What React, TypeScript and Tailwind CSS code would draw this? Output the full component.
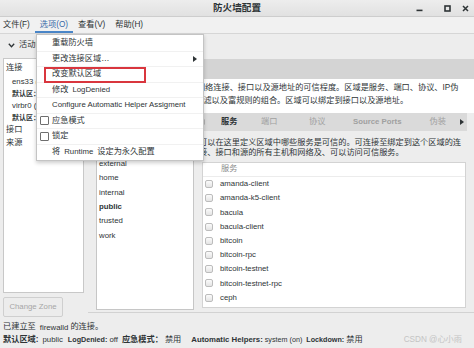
const zones = ["block", "dmz", "drop", "external", "home", "internal", "public", "trusted", "work"];

const services = [
  "amanda-client",
  "amanda-k5-client",
  "bacula",
  "bacula-client",
  "bitcoin",
  "bitcoin-rpc",
  "bitcoin-testnet",
  "bitcoin-testnet-rpc",
  "ceph",
];

function ListCheck() {
  return (
    <span className="block h-[8px] w-[8px] rounded-[2px] border border-[#bcbcbc] bg-linear-to-b from-[#fbfbfb] to-[#e4e4e4]" />
  );
}

function MenuCheck() {
  return <span className="block h-[9px] w-[9px] rounded-[1px] border border-[#6e6e6e] bg-white" />;
}

function Triangle({ dir, className = "" }: { dir: "left" | "right"; className?: string }) {
  return (
    <svg className={className} width="4" height="6" viewBox="0 0 4 6">
      <path d={dir === "right" ? "M0 0 L4 3 L0 6 Z" : "M4 0 L0 3 L4 6 Z"} fill="currentColor" />
    </svg>
  );
}

export default function App() {
  return (
    <div className="relative h-[348px] w-[474px] overflow-hidden bg-[#ededed] font-['Liberation_Sans','Noto_Sans_CJK_SC',sans-serif] text-[8.2px] leading-none text-[#2e3436]">
      {/* title bar */}
      <div className="grid h-[17px] grid-cols-[1fr_auto_1fr] items-center border-b border-[#cdcdcd] bg-linear-to-b from-[#ededed] to-[#e1e1e1]">
        <div />
        <div className="text-[9.6px] font-bold">防火墙配置</div>
        <div className="flex items-center justify-end pr-[5px]">
          <svg width="7" height="7" viewBox="0 0 7 7">
            <rect x="0.5" y="4.6" width="6" height="1.6" fill="#2e3436" />
          </svg>
          <svg className="ml-[21px]" width="7" height="7" viewBox="0 0 7 7">
            <rect x="1" y="1" width="5" height="5" fill="none" stroke="#2e3436" strokeWidth="1.6" />
          </svg>
          <svg className="ml-[11px]" width="7" height="7" viewBox="0 0 7 7">
            <path d="M1 1 L6 6 M6 1 L1 6" stroke="#2e3436" strokeWidth="1.5" />
          </svg>
        </div>
      </div>

      {/* menu bar */}
      <div className="flex h-[17px] items-stretch border-b border-[#d6d6d6] bg-[#f1f1f1]">
        <div className="-ml-[2px] flex items-center px-[5px]">文件(F)</div>
        <div className="flex items-center border-b-2 border-[#4a86c8] px-[5px] pt-[2px] text-[#3769a8]">选项(O)</div>
        <div className="flex items-center px-[5px]">查看(V)</div>
        <div className="flex items-center px-[5px]">帮助(H)</div>
      </div>

      {/* toolbar */}
      <div className="flex h-[22px] items-center pl-[8px]">
        <svg width="7" height="5" viewBox="0 0 7 5">
          <path d="M0.8 0.8 L3.5 3.8 L6.2 0.8" fill="none" stroke="#2e3436" strokeWidth="1.3" />
        </svg>
        <span className="ml-[4px]">活动的绑定</span>
      </div>

      {/* body */}
      <div className="flex h-[263px]">
        {/* left column */}
        <div className="ml-[3px] flex w-[81px] flex-col pt-[2px]">
          <div className="h-[235px] border border-[#c8c8c8] bg-white pl-[2px] pt-[3px]">
            <div className="flex h-[12px] items-center">连接</div>
            <div className="mt-[2px] flex h-[12px] items-center whitespace-nowrap pl-[6px] text-[7.8px]">ens33 (ens33)</div>
            <div className="flex h-[10px] items-center whitespace-nowrap pl-[6px] text-[7px] font-bold">默认区：public</div>
            <div className="mt-[2px] flex h-[12px] items-center whitespace-nowrap pl-[6px] text-[7.8px]">virbr0 (virbr0)</div>
            <div className="flex h-[10px] items-center whitespace-nowrap pl-[6px] text-[7px] font-bold">默认区：public</div>
            <div className="mt-[2px] flex h-[12px] items-center">接口</div>
            <div className="mt-[1px] flex h-[12px] items-center">来源</div>
          </div>
          <div className="mt-[4px] flex h-[20px] w-[60px] items-center justify-center rounded-[2px] border border-[#cfcfcf] bg-[#ececec] text-[7.8px] text-[#a6a6a6]">
            Change Zone
          </div>
        </div>

        {/* right area */}
        <div className="ml-[4px] flex min-w-0 flex-1 flex-col pt-[3px]">
          <div className="h-[20px] bg-[#d4d4d4]" />
          <div className="h-[34px] overflow-hidden whitespace-nowrap bg-white pt-[2px] leading-[13px]">
            <div className="pl-[7px]">FirewallD 区域定义了绑定的网络连接、接口以及源地址的可信程度。区域是服务、端口、协议、IP伪</div>
            <div className="pl-[14px]">装、端口/报文转发、icmp过滤以及富规则的组合。区域可以绑定到接口以及源地址。</div>
          </div>

          <div className="flex h-[200px] border-b border-[#d2d2d2] pl-[8px]">
            {/* zone list */}
            <div className="h-[197px] w-[98px] border border-[#c6c6c6] bg-white pl-[2px] text-[7.8px]">
              {zones.map((z) => (
                <div key={z} className={`flex h-[14.3px] items-center ${z === "public" ? "font-bold" : ""}`}>
                  {z}
                </div>
              ))}
            </div>

            {/* services page */}
            <div className="ml-[5px] flex w-[268px] flex-col">
              <div className="flex h-[18px] items-center bg-[#dadada] text-[#a0a0a0]">
                <Triangle dir="left" className="ml-[2px] text-[#b0b0b0]" />
                <span className="ml-[16px] font-bold text-[#2e3436]">服务</span>
                <span className="ml-[23.6px]">端口</span>
                <span className="ml-[31.6px]">协议</span>
                <span className="ml-[27.6px] text-[7.8px] font-bold">Source Ports</span>
                <span className="ml-[28px]">伪装</span>
                <Triangle dir="right" className="ml-auto mr-[3px] text-[#2e3436]" />
              </div>
              <div className="whitespace-nowrap pt-[7px] leading-[10px]">
                <div>可以在这里定义区域中哪些服务是可信的。可连接至绑定到这个区域的连</div>
                <div>接、接口和源的所有主机和网络及、可以访问可信服务。</div>
              </div>
              <div className="ml-[3px] mt-[4px] h-[146px] w-[264px] border border-[#d3d3d3] bg-white">
                <div className="flex h-[14px] items-center border-b border-[#ececec] pl-[18px] text-[#8c8c8c]">服务</div>
                {services.map((s) => (
                  <div key={s} className="flex h-[14.2px] items-center pl-[2px] text-[7.8px]">
                    <ListCheck />
                    <span className="ml-[7px]">{s}</span>
                  </div>
                ))}
              </div>
            </div>
          </div>
        </div>
      </div>

      {/* status bar */}
      <div className="flex flex-col pl-[3px] pt-[2px]">
        <div className="flex h-[13px] items-center">
          已建立至 <span className="ml-[4px] text-[7.8px]">firewalld</span>
          <span className="ml-[2px]">的连接。</span>
        </div>
        <div className="flex h-[12px] items-center whitespace-nowrap">
          <span className="font-bold">默认区域:</span>
          <span className="ml-[4px] text-[7.8px]">public</span>
          <span className="ml-[5px] text-[7.2px] font-bold">LogDenied:</span>
          <span className="ml-[2px] text-[7.8px]">off</span>
          <span className="ml-[4px] font-bold">应急模式：</span>
          <span className="ml-[2px]">禁用</span>
          <span className="ml-[10px] text-[7.8px] font-bold">Automatic Helpers:</span>
          <span className="ml-[2px] text-[7.2px]">system (on)</span>
          <span className="ml-[4px] text-[7.2px] font-bold">Lockdown:</span>
          <span className="ml-[2px]">禁用</span>
          <span className="ml-auto mr-[12px] text-[#c4c4c4]">CSDN @心小雨</span>
        </div>
      </div>

      {/* open 选项 menu */}
      <div className="absolute left-[36px] top-[34px] h-[127px] w-[168px] border border-[#c4c4c4] bg-white pt-[1px] shadow-[0_2px_4px_rgba(0,0,0,0.2)]">
        <div className="flex h-[15.5px] items-center border-b border-[#f1f1f1] pl-[15px]">重载防火墙</div>
        <div className="flex h-[15.5px] items-center border-b border-[#f1f1f1] pl-[15px]">
          更改连接区域…
          <Triangle dir="right" className="ml-auto mr-[6px] text-[#2e3436]" />
        </div>
        <div className="relative flex h-[15.5px] items-center border-b border-[#f1f1f1] pl-[15px]">
          改变默认区域
          <span className="absolute left-[7px] top-[0px] h-[16px] w-[102px] border-2 border-[#d9363e]" />
        </div>
        <div className="flex h-[15.5px] items-center border-b border-[#f1f1f1] pl-[15px]">
          修改 <span className="ml-[4px] text-[7.8px]">LogDenied</span>
        </div>
        <div className="flex h-[15.5px] items-center border-b border-[#f1f1f1] pl-[15px] text-[7.8px]">
          Configure Automatic Helper Assigment
        </div>
        <div className="flex h-[15.5px] items-center border-b border-[#f1f1f1] pl-[3px]">
          <MenuCheck />
          <span className="ml-[3px]">应急模式</span>
        </div>
        <div className="flex h-[15.5px] items-center border-b border-[#f1f1f1] pl-[3px]">
          <MenuCheck />
          <span className="ml-[3px]">锁定</span>
        </div>
        <div className="flex h-[15.5px] items-center pl-[15px]">
          将 <span className="mx-[4px] text-[7.8px]">Runtime</span> 设定为永久配置
        </div>
      </div>
    </div>
  );
}
